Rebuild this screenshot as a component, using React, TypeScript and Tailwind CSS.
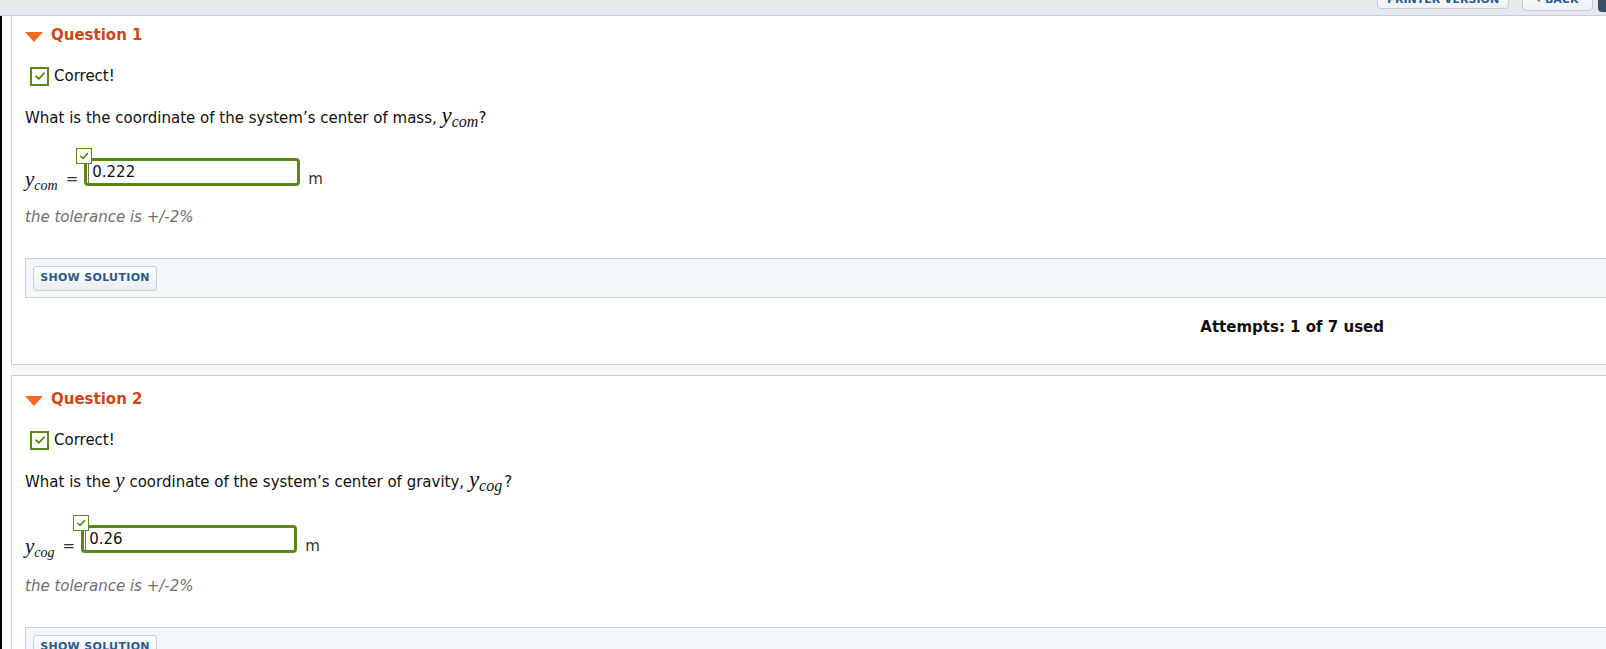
import React from "react";

const sans = { fontFamily: '"DejaVu Sans", Verdana, sans-serif' };
const serif = { fontFamily: '"Liberation Serif", "Times New Roman", serif' };

function Check({ size }: { size: number }) {
  return (
    <svg width={size} height={size} viewBox="0 0 10 10" className="block">
      <polyline points="2.2,5.2 4.2,7 7.9,3" fill="none" stroke="#5b8a1a" strokeWidth="1.3" strokeLinecap="round" strokeLinejoin="round" />
    </svg>
  );
}

function MathVar({ base, sub }: { base: string; sub: string }) {
  return (
    <span className="whitespace-nowrap leading-[14px]" style={serif}>
      <span className="italic text-[23px]">{base}</span>
      <span className="relative top-[4px] italic text-[16px]">{sub}</span>
    </span>
  );
}

function Panel({
  first,
  n,
  question,
  sub,
  value,
  extraA,
  extraB,
}: {
  first?: boolean;
  n: number;
  question: React.ReactNode;
  sub: string;
  value: string;
  extraA: string;
  extraB: string;
}) {
  return (
    <div
      className={
        "bg-white border-[#c8d0da] border-l border-r border-b pl-[13px] pb-[27px] " +
        (first ? "border-t-0 pt-[9px]" : "border-t pt-[13px]")
      }
    >
      {/* title */}
      <div className="flex items-center h-[20px]">
        <svg width="18" height="10" viewBox="0 0 18 10" className="translate-y-[2px]">
          <polygon points="0,0 18,0 9,10" fill="#f4691f" />
        </svg>
        <span className="ml-[8px] text-[15px] font-bold leading-[20px] text-[#cc4814]">Question {n}</span>
      </div>

      {/* correct */}
      <div className="mt-[21px] flex items-center h-[20px] pl-[5px]">
        <div className="w-[19px] h-[19px] border-2 border-[#5b8a1a] bg-white flex items-center justify-center">
          <Check size={14} />
        </div>
        <span className="ml-[5px] text-[15px] leading-[20px] text-[#111]">Correct!</span>
      </div>

      {/* question */}
      <div className="mt-[22px] text-[15px] leading-[20px] text-[#111] whitespace-nowrap">{question}</div>

      {/* input row */}
      <div className={"flex items-start h-[28px] " + extraA}>
        <div className="mt-[9px] h-[24px] leading-[24px] whitespace-nowrap text-[#111]" style={serif}>
          <span className="italic text-[21px]">y</span>
          <span className="relative top-[4px] italic text-[14px]">{sub}</span>
        </div>
        <div className="ml-[8px] mt-[13px] text-[15px] leading-[16px] text-[#333]">=</div>
        <div className="relative ml-[6px] w-[216px] h-[28px] border-[3px] border-[#5a8a14] rounded-[4px] bg-white flex items-stretch">
          <div className="ml-[1px] border-l border-[#6f6f6f] pl-[3px] flex items-center text-[15px] text-[#111]">
            {value}
          </div>
          <div className="absolute -left-[11px] -top-[13px] w-[16px] h-[16px] border-[1.5px] border-[#5b8a1a] bg-white flex items-center justify-center">
            <Check size={12} />
          </div>
        </div>
        <div className="ml-[8px] mt-[13px] text-[15px] leading-[16px] text-[#333]">m</div>
      </div>

      {/* tolerance */}
      <div className={"italic text-[15px] leading-[20px] text-[#707070] " + extraB}>the tolerance is +/-2%</div>

      {/* solution */}
      <div className="mt-[31px] border border-r-0 border-[#c8d0da] bg-[#f4f7fa] pt-[7px] pb-[6px] pl-[7px]">
        <div className="w-[124px] h-[25px] rounded-[3px] border border-[#c8d0da] bg-gradient-to-b from-white to-[#e9edf1] flex items-center justify-center text-[11px] font-bold tracking-[0.03em] text-[#2b5a8c]">
          SHOW SOLUTION
        </div>
      </div>

      {first && (
        <div className="mt-[19px] flex justify-end pr-[235px]">
          <span className="text-[15px] font-bold leading-[20px] text-[#111]">Attempts: 1 of 7 used</span>
        </div>
      )}
    </div>
  );
}

export default function App() {
  return (
    <div className="w-[1606px] h-[649px] overflow-hidden bg-white flex flex-col" style={sans}>
      <header className="h-[16px] shrink-0 bg-[#e6eaee] border-b border-[#c6ced8] flex justify-end items-start">
        <div className="w-[132px] h-[24px] -mt-[15px] rounded-[4px] border border-[#c3cbd5] bg-gradient-to-b from-white to-[#eef1f4] flex items-end justify-center pb-[3px] text-[11px] leading-[11px] font-bold text-[#2b5a8c]">
          PRINTER VERSION
        </div>
        <div className="ml-[13px] w-[71px] h-[24px] -mt-[13px] rounded-[4px] border border-[#c3cbd5] bg-gradient-to-b from-white to-[#eef1f4] flex items-end justify-center pb-[5px] text-[11px] leading-[11px] font-bold text-[#2b5a8c]">
          ‹ BACK
        </div>
        <div className="ml-[5px] w-[8px] h-[24px] -mt-[12px] rounded-l-[4px] bg-[#3b4f66]" />
      </header>
      <div className="flex flex-1 min-h-0">
        <div className="w-[2px] bg-black shrink-0" />
        <div className="w-[9px] bg-white shrink-0" />
        <div className="w-[1609px] shrink-0 bg-[#f4f7fa] flex flex-col">
          <Panel
            first
            n={1}
            sub="com"
            value="0.222"
            extraA="mt-[30px]"
            extraB="mt-[21px]"
            question={
              <>
                What is the coordinate of the system’s center of mass, <MathVar base="y" sub="com" />
                <span>?</span>
              </>
            }
          />
          <div className="h-[10px] shrink-0" />
          <Panel
            n={2}
            sub="cog"
            value="0.26"
            extraA="mt-[33px]"
            extraB="mt-[23px]"
            question={
              <>
                What is the{" "}
                <span className="italic text-[21px] leading-[14px]" style={serif}>
                  y
                </span>{" "}
                coordinate of the system’s center of gravity, <MathVar base="y" sub="cog" />
                <span className="ml-[2px]">?</span>
              </>
            }
          />
        </div>
      </div>
    </div>
  );
}
